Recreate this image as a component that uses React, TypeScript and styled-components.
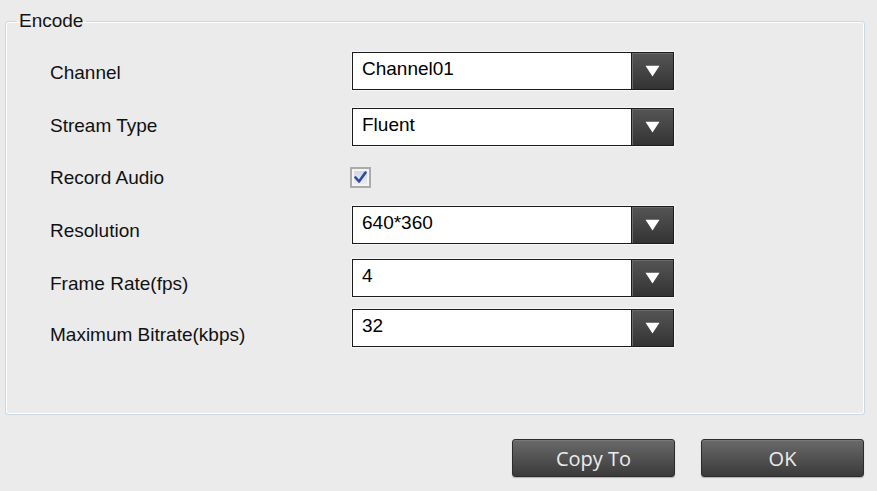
import React from "react";
import styled, { createGlobalStyle } from "styled-components";

const Global = createGlobalStyle`
  html, body { margin: 0; padding: 0; background: #ebebeb; }
  body { font-family: "Liberation Sans", Arial, sans-serif; }
`;

const Page = styled.div`
  width: 877px;
  height: 491px;
  box-sizing: border-box;
  padding: 10px 12px 0 5px;
  display: flex;
  flex-direction: column;
`;

const Group = styled.fieldset`
  margin: 0;
  padding: 0;
  border: 1px solid #cbd8e1;
  border-radius: 3px;
  box-shadow: inset 0 0 0 1px #ffffff;
  min-width: 0;
`;

const Legend = styled.legend`
  margin-left: 10px;
  padding: 0 3px;
  font-size: 19px;
  line-height: 22px;
  color: #141414;
`;

const Form = styled.div`
  padding: 20px 0 67px 44px;
`;

const Row = styled.div<{ $h: number }>`
  display: grid;
  grid-template-columns: 302px 322px;
  align-items: start;
  height: ${(p) => p.$h}px;
`;

const Label = styled.div<{ $top: number }>`
  padding-top: ${(p) => p.$top}px;
  font-size: 19px;
  line-height: 22px;
  color: #111;
  white-space: nowrap;
`;

const Select = styled.div`
  display: flex;
  width: 322px;
  height: 38px;
  box-sizing: border-box;
  border: 1px solid #1c1c1c;
  box-shadow: 0 0 0 1px #f7f7f7;
  background: #fff;
`;

const SelectValue = styled.div`
  flex: 1;
  padding: 5px 0 0 9px;
  font-size: 19px;
  line-height: 22px;
  color: #000;
  border-right: 1px solid #1c1c1c;
`;

const ArrowBox = styled.div`
  width: 41px;
  display: flex;
  align-items: center;
  justify-content: center;
  background: linear-gradient(#555555, #333333);
  box-shadow: inset 1px 1px 0 #6a6a6a;
`;

const Check = styled.div`
  width: 21px;
  height: 21px;
  margin-left: -2px;
  box-sizing: border-box;
  border: 2px solid #ababab;
  background: #f4f4f4;
  padding: 2px;
`;

const CheckInner = styled.div`
  width: 100%;
  height: 100%;
  background: linear-gradient(#d3d8e2, #e9ecf2);
  display: flex;
  align-items: center;
  justify-content: center;
`;

const Actions = styled.div`
  display: flex;
  justify-content: flex-end;
  gap: 26px;
  margin-top: 24px;
  padding-right: 1px;
`;

const Button = styled.button`
  width: 163px;
  height: 38px;
  border: 1px solid #2c2c2c;
  border-radius: 3px;
  background: linear-gradient(#6a6a6a, #3a3a3a);
  box-shadow: inset 0 1px 0 #7a7a7a, 0 1px 1px rgba(0, 0, 0, 0.25);
  color: #ececec;
  font-family: "Open Sans", "Noto Sans", sans-serif;
  font-size: 20px;
  padding: 0;
  cursor: pointer;
`;

const Arrow = () => (
  <svg width="15" height="12" viewBox="0 0 15 12">
    <path d="M0.5 0.8 L14.5 0.8 L7.5 11.5 Z" fill="#ffffff" />
  </svg>
);

const Tick = () => (
  <svg width="13" height="13" viewBox="0 0 13 13">
    <path
      d="M1.5 6.5 L5 10.5 L11.5 1.5"
      stroke="#2c4aa8"
      strokeWidth="2.6"
      strokeLinecap="round"
      strokeLinejoin="round"
      fill="none"
    />
  </svg>
);

type Field =
  | { label: string; h: number; top: number; kind: "select"; value: string }
  | { label: string; h: number; top: number; kind: "check" };

const fields: Field[] = [
  { label: "Channel", h: 56, top: 10, kind: "select", value: "Channel01" },
  { label: "Stream Type", h: 59, top: 7, kind: "select", value: "Fluent" },
  { label: "Record Audio", h: 39, top: 0, kind: "check" },
  { label: "Resolution", h: 53, top: 14, kind: "select", value: "640*360" },
  { label: "Frame Rate(fps)", h: 50, top: 14, kind: "select", value: "4" },
  { label: "Maximum Bitrate(kbps)", h: 38, top: 15, kind: "select", value: "32" },
];

export default function App() {
  return (
    <>
      <Global />
      <Page>
        <Group>
          <Legend>Encode</Legend>
          <Form>
            {fields.map((f) => (
              <Row key={f.label} $h={f.h}>
                <Label $top={f.top}>{f.label}</Label>
                {f.kind === "select" ? (
                  <Select>
                    <SelectValue>{f.value}</SelectValue>
                    <ArrowBox>
                      <Arrow />
                    </ArrowBox>
                  </Select>
                ) : (
                  <Check>
                    <CheckInner>
                      <Tick />
                    </CheckInner>
                  </Check>
                )}
              </Row>
            ))}
          </Form>
        </Group>
        <Actions>
          <Button>Copy To</Button>
          <Button>OK</Button>
        </Actions>
      </Page>
    </>
  );
}
